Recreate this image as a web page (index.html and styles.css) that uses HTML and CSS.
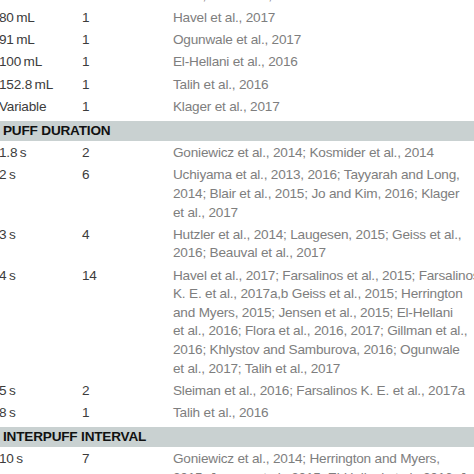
FILE: index.html
```html
<!DOCTYPE html>
<html>
<head>
<meta charset="utf-8">
<link rel="stylesheet" href="styles.css">
</head>
<body>
<div class="table">
  <div class="row lead"><div class="c1"></div><div class="c2"></div><div class="c3">2016; Talih et al., 2016</div></div>
  <div class="row"><div class="c1">80&thinsp;mL</div><div class="c2">1</div><div class="c3">Havel et al., 2017</div></div>
  <div class="row"><div class="c1">91&thinsp;mL</div><div class="c2">1</div><div class="c3">Ogunwale et al., 2017</div></div>
  <div class="row"><div class="c1">100&thinsp;mL</div><div class="c2">1</div><div class="c3">El-Hellani et al., 2016</div></div>
  <div class="row"><div class="c1">152.8&thinsp;mL</div><div class="c2">1</div><div class="c3">Talih et al., 2016</div></div>
  <div class="row"><div class="c1">Variable</div><div class="c2">1</div><div class="c3">Klager et al., 2017</div></div>
  <div class="band">PUFF DURATION</div>
  <div class="row"><div class="c1">1.8&thinsp;s</div><div class="c2">2</div><div class="c3">Goniewicz et al., 2014; Kosmider et al., 2014</div></div>
  <div class="row"><div class="c1">2&thinsp;s</div><div class="c2">6</div><div class="c3">Uchiyama et al., 2013, 2016; Tayyarah and Long,<br>2014; Blair et al., 2015; Jo and Kim, 2016; Klager<br>et al., 2017</div></div>
  <div class="row"><div class="c1">3&thinsp;s</div><div class="c2">4</div><div class="c3">Hutzler et al., 2014; Laugesen, 2015; Geiss et al.,<br>2016; Beauval et al., 2017</div></div>
  <div class="row"><div class="c1">4&thinsp;s</div><div class="c2">14</div><div class="c3">Havel et al., 2017; Farsalinos et al., 2015; Farsalinos<br>K. E. et al., 2017a,b Geiss et al., 2015; Herrington<br>and Myers, 2015; Jensen et al., 2015; El-Hellani<br>et al., 2016; Flora et al., 2016, 2017; Gillman et al.,<br>2016; Khlystov and Samburova, 2016; Ogunwale<br>et al., 2017; Talih et al., 2017</div></div>
  <div class="row"><div class="c1">5&thinsp;s</div><div class="c2">2</div><div class="c3">Sleiman et al., 2016; Farsalinos K. E. et al., 2017a</div></div>
  <div class="row"><div class="c1">8&thinsp;s</div><div class="c2">1</div><div class="c3">Talih et al., 2016</div></div>
  <div class="band">INTERPUFF INTERVAL</div>
  <div class="row"><div class="c1">10&thinsp;s</div><div class="c2">7</div><div class="c3">Goniewicz et al., 2014; Herrington and Myers,<br>2015; Jensen et al., 2015; El-Hellani et al., 2016; Jo</div></div>
</div>
</body>
</html>
```
FILE: styles.css
```css
html, body {
  margin: 0;
  padding: 0;
  background: #ffffff;
  overflow: hidden;
}
body {
  width: 474px;
  height: 474px;
}
.table {
  margin-top: -15.2px;
  margin-left: -1px;
  width: 520px;
  font-family: "Liberation Sans", Arial, sans-serif;
  font-size: 13.6px;
  letter-spacing: -0.2px;
  line-height: 18.6px;
}
.row {
  display: grid;
  grid-template-columns: 83px 91px 1fr;
  padding: 1.82px 0;
}
.c1, .c2 {
  color: #3c3c3c;
}
.c3 {
  color: #7e7e7e;
  white-space: nowrap;
}
.band {
  background: #c9d1d1;
  color: #111111;
  font-weight: bold;
  height: 19.5px;
  line-height: 19.5px;
  margin: 2.9px 0 1.85px 1px;
  padding-left: 3px;
}
```
